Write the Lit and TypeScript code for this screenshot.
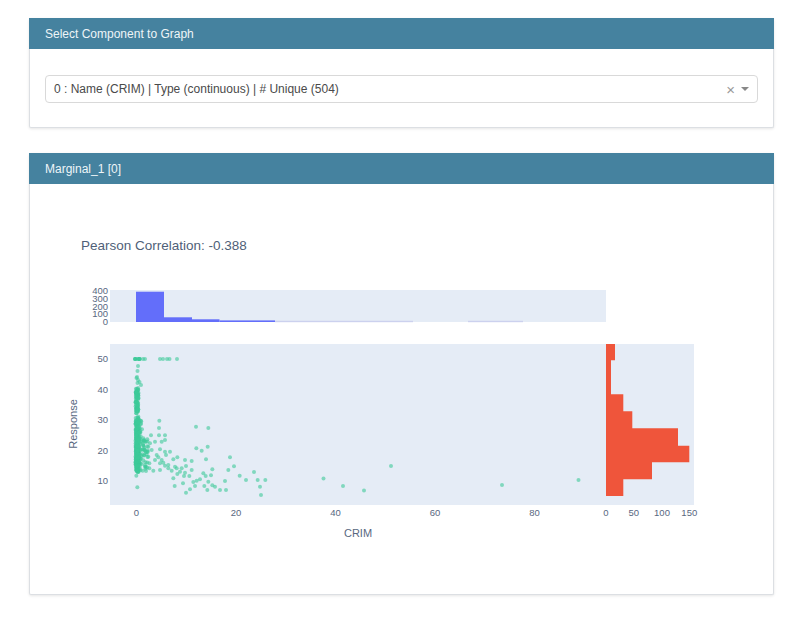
import { LitElement, html, css, svg } from "lit";
import { customElement } from "lit/decorators.js";

type Pt = [number, number];

// Points read off the reference, as [zoomX, zoomY] in a 3x crop at (60,400).
const SPREAD: Pt[] = [
  [298,62],[297,84],[408,80],[445,84],[297,106],[315,106],[273,106],[246,88],[443,140],[409,145],
  [425,152],[510,172],[438,178],[522,199],[375,180],[395,183],[352,172],[340,178],[457,208],[505,210],
  [582,216],[539,227],[558,240],[593,240],[616,240],[600,260],[603,285],[495,243],[430,220],[437,228],
  [453,226],[232,262],[229,227],[344,258],[378,278],[390,268],[369,250],[340,235],[405,258],[433,258],
  [442,270],[480,270],[498,270],[465,260],[457,256],[445,245],[420,238],[410,242],[400,246],[388,228],
  [375,218],[395,210],[378,198],[365,205],[350,205],[335,212],[325,205],[315,197],[300,190],[285,180],
  [290,165],[315,155],[330,155],[318,165],[300,148],[285,125],[262,118],[250,115],[270,130],[315,120],
  [305,125],[265,140],[262,155],[265,170],[268,190],[255,200],[248,212],[280,212],[300,210],[325,195],
  [305,180],[258,125],[275,150],[295,172],[310,188],[345,200],[360,215],[372,228],[352,222],[268,205],
];

const FAR: Pt[] = [
  [323.5,478.5],[343,486],[364,490.5],[391,466],[502,485],[578.5,480],
  [160,359],[163,359],[167,359],[169.5,359],[177,359],[145,359],[143,359],
];

function buildPoints(): Pt[] {
  const pts: Pt[] = SPREAD.map(([x, y]) => [60 + x / 3, 400 + y / 3] as Pt);
  pts.push(...FAR);
  let seed = 12345;
  const rnd = () => {
    seed = (seed * 16807) % 2147483647;
    return seed / 2147483647;
  };
  for (let i = 0; i < 10; i++) pts.push([135 + rnd() * 5, 359]);
  for (const p of [[138, 366], [137.5, 371], [137, 377], [138, 380], [139.5, 382], [141, 385], [137.5, 383], [136.5, 378]] as Pt[]) pts.push(p);
  for (let i = 0; i < 80; i++) pts.push([135.5 + rnd() * 3, 388 + rnd() * 32]);
  for (let i = 0; i < 260; i++) pts.push([135.5 + rnd() * 6 * (0.35 + 0.65 * rnd()), 420 + rnd() * 53]);
  for (let i = 0; i < 35; i++) pts.push([140 + rnd() * 8, 440 + rnd() * 31]);
  return pts;
}

const POINTS = buildPoints();

// [x0, x1, top] of each bar in the upper histogram
const TOP_BARS: [number, number, number][] = [
  [136, 164, 291.7],[164, 192, 317.3],[192, 219.5, 319.3],[219.5, 275, 320.4],
];
const TOP_THIN: [number, number][] = [[275, 413], [468, 523]];
// [y0, y1, x1] of each bar in the right histogram
const SIDE_BARS: [number, number, number][] = [
  [344, 360.3, 615],[360.3, 394.3, 611],[394.3, 411.3, 623.3],[411.3, 428.3, 632.3],
  [428.3, 445.7, 678],[445.7, 462.3, 689.3],[462.3, 479.3, 652],[479.3, 496, 623.3],
];
const SIDE_OUTLINE = `M606 344 ${SIDE_BARS.map(([a, b, r]) => `L${r} ${a} L${r} ${b}`).join(" ")} L606 496 Z`;

const X_TICKS: [string, number][] = [["0",136.5],["20",236],["40",335.5],["60",435],["80",534.5],["0",606],["50",633.7],["100",662],["150",689.3]];
const Y_TICKS: [string, number][] = [["50",359],["40",389.5],["30",420],["20",451],["10",481]];
const HIST_TICKS: [string, number][] = [["400",291.5],["300",299],["200",307],["100",314.5],["0",322]];

@customElement("app-root")
export class AppRoot extends LitElement {
  static styles = css`
    :host {
      display: flex;
      flex-direction: column;
      gap: 25px;
      padding: 18px 22px 30px 29px;
      font-family: "Liberation Sans", Arial, sans-serif;
      background: #fff;
    }
    .card {
      border: 1px solid #dcdfe3;
      border-top: 0;
      border-radius: 2px;
      box-shadow: 0 1px 3px rgba(0, 0, 0, 0.1);
      background: #fff;
    }
    .head {
      height: 31px;
      margin: 0 -1px;
      padding-left: 16px;
      display: flex;
      align-items: center;
      background: #45829f;
      color: #eef5f8;
      font-size: 12px;
    }
    .select-body {
      padding: 26px 15px 24px;
    }
    .select {
      box-sizing: border-box;
      height: 28px;
      border: 1px solid #d9d9d9;
      border-radius: 4px;
      display: flex;
      align-items: center;
      padding: 0 8px;
      color: #4a4a4a;
      font-size: 12px;
    }
    .value {
      flex: 1;
    }
    .clear {
      color: #999;
      font-size: 15px;
      line-height: 1;
      margin-right: 6px;
    }
    .caret {
      width: 0;
      height: 0;
      border: 4px solid transparent;
      border-top: 4px solid #888;
      border-bottom: 0;
    }
    .plot {
      display: block;
      width: 743px;
      height: 410px;
    }
    .plot text {
      font-family: "Liberation Sans", Arial, sans-serif;
      fill: #59687f;
    }
    .tick {
      font-size: 9.5px;
    }
    .axis {
      font-size: 11px;
    }
    .plot .title {
      font-size: 13.5px;
      fill: #4f5f78;
    }
  `;

  render() {
    return html`
      <section class="card">
        <div class="head">Select Component to Graph</div>
        <div class="select-body">
          <div class="select">
            <span class="value">0 : Name (CRIM) | Type (continuous) | # Unique (504)</span>
            <span class="clear">×</span>
            <span class="caret"></span>
          </div>
        </div>
      </section>
      <section class="card">
        <div class="head">Marginal_1 [0]</div>
        <svg class="plot" viewBox="30 184 743 410">
          <rect x="110" y="290" width="496" height="32" fill="#e5ecf6"></rect>
          <rect x="110" y="344" width="584" height="161" fill="#e5ecf6"></rect>
          ${TOP_BARS.map(([a, b, t]) => svg`<rect x=${a} y=${t} width=${b - a} height=${322 - t} fill="#636efa"></rect>`)}
          ${TOP_THIN.map(([a, b]) => svg`<rect x=${a} y="320.8" width=${b - a} height="1.4" fill="#ccd1ee"></rect>`)}
          <path d=${SIDE_OUTLINE} fill="#ef553b"></path>
          ${POINTS.map(([x, y]) => svg`<circle cx=${x} cy=${y} r="2" fill="#3ec99a" fill-opacity="0.6"></circle>`)}
          <text class="title" x="81" y="249.5">Pearson Correlation: -0.388</text>
          ${X_TICKS.map(([t, x]) => svg`<text class="tick" x=${x} y="516" text-anchor="middle">${t}</text>`)}
          ${Y_TICKS.map(([t, y]) => svg`<text class="tick" x="108" y=${y + 3} text-anchor="end">${t}</text>`)}
          ${HIST_TICKS.map(([t, y]) => svg`<text class="tick" x="108" y=${y + 2.8} text-anchor="end">${t}</text>`)}
          <text class="axis" x="358" y="537" text-anchor="middle">CRIM</text>
          <text class="axis" x="77" y="424" text-anchor="middle" transform="rotate(-90 77 424)">Response</text>
        </svg>
      </section>
    `;
  }
}
